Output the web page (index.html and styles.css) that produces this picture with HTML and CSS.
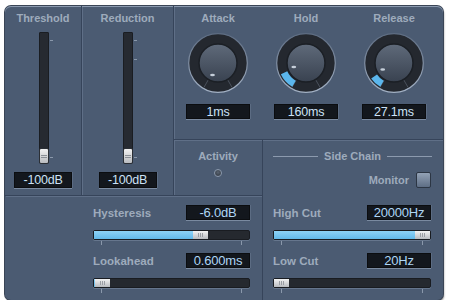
FILE: index.html
```html
<!DOCTYPE html>
<html lang="en">
<head>
  <meta charset="UTF-8">
  <title>Noise Gate</title>
  <link rel="stylesheet" href="styles.css">
</head>
<body>
  <div class="panel">
    <div class="cell fader-cell threshold">
      <div class="label">Threshold</div>
      <div class="fader">
        <span class="ftick t-top"></span>
        <span class="ftick t-bottom"></span>
        <span class="fader-thumb"></span>
      </div>
      <div class="value fader-value">-100dB</div>
    </div>

    <div class="cell fader-cell reduction">
      <div class="label">Reduction</div>
      <div class="fader">
        <span class="ftick t-top"></span>
        <span class="ftick t-mid"></span>
        <span class="ftick t-bottom"></span>
        <span class="fader-thumb"></span>
      </div>
      <div class="value fader-value">-100dB</div>
    </div>

    <div class="cell knobs">
      <div class="knob-col">
        <div class="label">Attack</div>
        <svg class="knob" viewBox="0 0 60 60" width="60" height="60">
          <defs>
            <linearGradient id="cap" x1="0" y1="0" x2="0" y2="1">
              <stop offset="0" stop-color="#5f6a7a"/>
              <stop offset="1" stop-color="#394250"/>
            </linearGradient>
            <linearGradient id="rim" x1="0" y1="0" x2="0" y2="1">
              <stop offset="0" stop-color="#5d6c82"/>
              <stop offset="1" stop-color="#a3b1c4"/>
            </linearGradient>
          </defs>
          <circle cx="30" cy="30" r="29.3" fill="#24282f" stroke="url(#rim)" stroke-width="1.2"/>
          <line x1="20.25" y1="46.9" x2="16" y2="54.3" stroke="#4a515c" stroke-width="1"/>
          <line x1="39.75" y1="46.9" x2="44" y2="54.3" stroke="#4a515c" stroke-width="1"/>
          <circle cx="30" cy="30" r="19" fill="url(#cap)" stroke="#1b1f25" stroke-width="1.5"/>
          <ellipse cx="24.5" cy="42" rx="2.4" ry="1.3" fill="#c5ced9"/>
        </svg>
        <div class="value knob-value">1ms</div>
      </div>
      <div class="knob-col">
        <div class="label">Hold</div>
        <svg class="knob" viewBox="0 0 60 60" width="60" height="60">
          <circle cx="30" cy="30" r="29.3" fill="#24282f" stroke="url(#rim)" stroke-width="1.2"/>
          <line x1="20.25" y1="46.9" x2="16" y2="54.3" stroke="#4a515c" stroke-width="1"/>
          <line x1="39.75" y1="46.9" x2="44" y2="54.3" stroke="#4a515c" stroke-width="1"/>
          <path d="M18 50.78 A24 24 0 0 1 8.08 39.76" fill="none" stroke="#5bb6ec" stroke-width="7"/>
          <circle cx="30" cy="30" r="19" fill="url(#cap)" stroke="#1b1f25" stroke-width="1.5"/>
          <ellipse cx="17.8" cy="34" rx="2.4" ry="1.3" fill="#c5ced9"/>
        </svg>
        <div class="value knob-value">160ms</div>
      </div>
      <div class="knob-col">
        <div class="label">Release</div>
        <svg class="knob" viewBox="0 0 60 60" width="60" height="60">
          <circle cx="30" cy="30" r="29.3" fill="#24282f" stroke="url(#rim)" stroke-width="1.2"/>
          <line x1="20.25" y1="46.9" x2="16" y2="54.3" stroke="#4a515c" stroke-width="1"/>
          <line x1="39.75" y1="46.9" x2="44" y2="54.3" stroke="#4a515c" stroke-width="1"/>
          <path d="M18 50.78 A24 24 0 0 1 10.1 43.42" fill="none" stroke="#5bb6ec" stroke-width="7"/>
          <circle cx="30" cy="30" r="19" fill="url(#cap)" stroke="#1b1f25" stroke-width="1.5"/>
          <ellipse cx="18.7" cy="36.5" rx="2.4" ry="1.3" fill="#c5ced9"/>
        </svg>
        <div class="value knob-value">27.1ms</div>
      </div>
    </div>

    <div class="cell activity">
      <div class="label">Activity</div>
      <span class="led"></span>
    </div>

    <div class="cell sidechain">
      <div class="sc-head">
        <span class="sc-line"></span>
        <span class="label">Side Chain</span>
        <span class="sc-line"></span>
      </div>
      <div class="monitor">
        <span class="label">Monitor</span>
        <span class="checkbox"></span>
      </div>
      <div class="ctl first">
        <div class="ctl-head">
          <span class="label">High Cut</span>
          <span class="value ctl-value">20000Hz</span>
        </div>
        <div class="hslider">
          <span class="fill" style="width:145px"></span>
          <span class="hthumb"></span>
        </div>
        <div class="ticks"><span></span><span></span></div>
      </div>
      <div class="ctl">
        <div class="ctl-head">
          <span class="label">Low Cut</span>
          <span class="value ctl-value">20Hz</span>
        </div>
        <div class="hslider">
          <span class="fill" style="width:0px"></span>
          <span class="hthumb"></span>
        </div>
        <div class="ticks"><span></span><span></span></div>
      </div>
    </div>

    <div class="cell bottom">
      <div class="ctl">
        <div class="ctl-head">
          <span class="label">Hysteresis</span>
          <span class="value ctl-value">-6.0dB</span>
        </div>
        <div class="hslider">
          <span class="fill" style="width:99px"></span>
          <span class="hthumb"></span>
        </div>
        <div class="ticks"><span></span><span></span></div>
      </div>
      <div class="ctl">
        <div class="ctl-head">
          <span class="label">Lookahead</span>
          <span class="value ctl-value">0.600ms</span>
        </div>
        <div class="hslider">
          <span class="fill" style="width:1px"></span>
          <span class="hthumb"></span>
        </div>
        <div class="ticks"><span></span><span></span></div>
      </div>
    </div>
  </div>
</body>
</html>
```

FILE: styles.css
```css
body {
  margin: 0;
  background: #fff;
  font-family: 'Liberation Sans', Arial, sans-serif;
}
.panel {
  margin: 6px 0 0 5px;
  width: 438px;
  height: 294px;
  display: grid;
  grid-template-columns: 77px 92px 88px 181px;
  grid-template-rows: 134px 56px 104px;
  background: #4b5b72;
  border-radius: 6px;
  box-shadow: 0 0 0 1px #3a4556, inset 0 1px 0 #8c9bb0, 1px 2px 2px rgba(0,0,0,0.45);
}
.cell {
  box-sizing: border-box;
}
.label {
  color: #9eabbc;
  font-size: 11px;
  font-weight: 700;
  line-height: 14px;
  white-space: nowrap;
}
.value {
  box-sizing: border-box;
  display: flex;
  align-items: center;
  justify-content: center;
  background: #13171d;
  border: 1px solid #0b0d10;
  box-shadow: 0 1px 0 #7a8aa0, 1px 0 0 #5c6c83;
  color: #cce2f6;
  font-size: 12.5px;
  letter-spacing: -0.2px;
}

/* vertical faders */
.fader-cell {
  grid-row: 1 / 3;
  display: flex;
  flex-direction: column;
  align-items: center;
  padding-top: 5px;
  border-right: 1px solid #36445a;
  border-bottom: 1px solid #36445a;
  box-shadow: 1px 1px 0 #5f6f87;
}
.threshold { grid-column: 1; }
.reduction { grid-column: 2; }
.fader {
  position: relative;
  box-sizing: border-box;
  width: 10px;
  height: 131px;
  margin-top: 7px;
  margin-left: 1px;
  background: #262a31;
  border: 1px solid #1a1d22;
  border-radius: 1px;
}
.ftick {
  position: absolute;
  left: 10px;
  width: 3px;
  height: 1px;
  background: #8a98ab;
}
.t-top { top: 7px; }
.t-mid { top: 26px; }
.t-bottom { top: 124px; }
.fader-thumb {
  position: absolute;
  left: 0;
  bottom: -1px;
  width: 8px;
  height: 14px;
  border-radius: 1px;
  background:
    linear-gradient(#8a8f96, #8a8f96) center 6px / 6px 1px no-repeat,
    linear-gradient(#8a8f96, #8a8f96) center 8px / 6px 1px no-repeat,
    linear-gradient(#f2f2f2, #b9bcc0);
  box-shadow: 0 0 0 1px #2b2f35;
}
.fader-value {
  width: 58px;
  height: 16px;
  margin-top: 9px;
}

/* knobs */
.knobs {
  grid-column: 3 / 5;
  grid-row: 1;
  display: grid;
  grid-template-columns: repeat(3, 88px);
  border-bottom: 1px solid #36445a;
  box-shadow: 0 1px 0 #5f6f87;
}
.knob-col {
  display: flex;
  flex-direction: column;
  align-items: center;
  padding-top: 5px;
}
.knob {
  display: block;
  margin-top: 8px;
}
.knob-value {
  width: 64px;
  height: 15px;
  margin-top: 11px;
}

/* activity */
.activity {
  grid-column: 3;
  grid-row: 2;
  display: flex;
  flex-direction: column;
  align-items: center;
  padding-top: 9px;
  border-bottom: 1px solid #36445a;
  box-shadow: 0 1px 0 #5f6f87;
}
.led {
  box-sizing: border-box;
  width: 8px;
  height: 8px;
  margin-top: 6px;
  border-radius: 50%;
  background: radial-gradient(circle at 50% 40%, #5a6472, #2a3038);
  border: 1px solid #8c9aad;
}

/* side chain */
.sidechain {
  grid-column: 4;
  grid-row: 2 / 4;
  border-left: 1px solid #36445a;
  padding: 9px 12px 0 10px;
}
.sc-head {
  display: flex;
  align-items: center;
  gap: 6px;
  margin-right: -1px;
}
.sc-line {
  flex: 1;
  height: 1px;
  background: #8c9aae;
}
.monitor {
  display: flex;
  justify-content: flex-end;
  align-items: center;
  gap: 7px;
  margin-top: 9px;
}
.checkbox {
  box-sizing: border-box;
  width: 15px;
  height: 16px;
  border: 1px solid #2c3644;
  border-radius: 2px;
  background: linear-gradient(#93a2b6, #5e6e85);
}
.sidechain .ctl.first {
  margin-top: 17px;
}

/* bottom controls */
.bottom {
  grid-column: 1 / 4;
  grid-row: 3;
  padding: 9px 12px 0 88px;
}
.ctl + .ctl {
  margin-top: 8px;
}
.ctl-head {
  display: flex;
  justify-content: space-between;
  align-items: center;
  height: 15px;
}
.ctl-head .label {
  font-size: 11.5px;
}
.ctl-value {
  width: 64px;
  height: 15px;
  color: #aed6f5;
  font-size: 13px;
}
.hslider {
  box-sizing: border-box;
  display: flex;
  height: 10px;
  margin-top: 10px;
  background: #25292f;
  border: 1px solid #191c21;
  border-radius: 2px;
  box-shadow: 0 1px 0 #66768d;
}
.fill {
  display: block;
  height: 100%;
  background: linear-gradient(#8fd3f7, #63b9ea);
}
.hthumb {
  display: block;
  width: 15px;
  height: 100%;
  background:
    linear-gradient(#9a9ea4, #9a9ea4) 5px 2px / 1px 4px no-repeat,
    linear-gradient(#9a9ea4, #9a9ea4) 7px 2px / 1px 4px no-repeat,
    linear-gradient(#9a9ea4, #9a9ea4) 9px 2px / 1px 4px no-repeat,
    linear-gradient(#f3f3f3, #b8bbbf);
}
.ticks {
  display: flex;
  justify-content: space-between;
  height: 4px;
  margin-top: 1px;
  padding: 0 8px;
}
.ticks span {
  width: 1px;
  background: #8a98ab;
}
```
